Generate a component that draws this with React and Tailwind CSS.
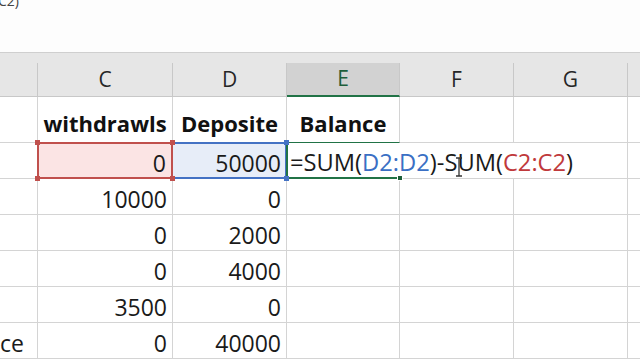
import React from "react";

const font = { fontFamily: '"Open Sans", "Noto Sans", sans-serif' };

const GRID = "grid grid-cols-[38px_135px_114px_113px_114px_114px_1fr]";

// plain data rows under the selected one
const rows = [
  ["", "10000", "0"],
  ["", "0", "2000"],
  ["", "0", "4000"],
  ["", "3500", "0"],
  ["ce", "0", "40000"],
];

const Cell = ({ children, className = "" }) => (
  <div
    className={`h-[36px] border-r border-b border-[#d4d4d4] flex items-end leading-none pb-[3px] text-[23px] text-[#1a1a1a] overflow-hidden ${className}`}
  >
    {children}
  </div>
);

const Handle = ({ className }) => (
  <span className={`absolute w-[5px] h-[5px] ${className}`} />
);

const App = () => {
  return (
    <div className="w-[640px] h-[360px] overflow-hidden bg-white" style={font}>
      {/* formula bar, scrolled mostly out of view */}
      <div className="h-[52px] bg-[#fdfdfd] overflow-hidden">
        <div className="text-[14px] leading-none text-[#444] -mt-[6px] -ml-[2px]">C2)</div>
      </div>

      {/* column headers */}
      <div className="border-t border-[#cfcfcf] bg-[#e6e6e6]">
        <div className="h-[10px]" />
        <div className={`${GRID} h-[34px] text-[21px] text-[#262626]`}>
          <div className="border-r border-b border-[#c8c8c8]" />
          <div className="border-r border-b border-[#c8c8c8] flex items-center justify-center">C</div>
          <div className="border-r border-b border-[#c8c8c8] flex items-center justify-center">D</div>
          <div className="border-r border-[#c8c8c8] border-b-2 border-b-[#217346] bg-[#d2d2d2] flex items-center justify-center text-[#1d5e3a]">E</div>
          <div className="border-r border-b border-[#c8c8c8] flex items-center justify-center">F</div>
          <div className="border-r border-b border-[#c8c8c8] flex items-center justify-center">G</div>
          <div className="border-b border-[#c8c8c8]" />
        </div>
      </div>

      {/* title row */}
      <div className={`${GRID} font-bold text-[22px] text-[#111]`}>
        <div className="h-[46px] border-r border-b border-[#d4d4d4]" />
        <div className="h-[46px] border-r border-b border-[#d4d4d4] flex items-end justify-center pb-[8px] leading-none">withdrawls</div>
        <div className="h-[46px] border-r border-b border-[#d4d4d4] flex items-end justify-center pb-[8px] leading-none">Deposite</div>
        <div className="h-[46px] border-r border-[#d4d4d4] border-b border-b-[#217346] flex items-end justify-center pb-[8px] leading-none">Balance</div>
        <div className="h-[46px] border-r border-b border-[#d4d4d4]" />
        <div className="h-[46px] border-r border-b border-[#d4d4d4]" />
        <div className="h-[46px] border-b border-[#d4d4d4]" />
      </div>

      {/* row being edited */}
      <div className={`${GRID} relative`}>
        <Cell />
        <Cell className="relative justify-end pr-[6px] bg-[#fbe4e4] overflow-visible">
          <span className="absolute -top-[1px] -left-[1px] -right-[1px] -bottom-[1px] border-2 border-[#c0504d]" />
          <Handle className="-top-[3px] -left-[3px] bg-[#c0504d]" />
          <Handle className="-top-[3px] -right-[3px] bg-[#c0504d] z-10" />
          <Handle className="-bottom-[3px] -left-[3px] bg-[#c0504d]" />
          <Handle className="-bottom-[3px] -right-[3px] bg-[#c0504d] z-10" />
          <span className="relative">0</span>
        </Cell>
        <Cell className="relative justify-end pr-[5px] bg-[#e7edf8] overflow-visible">
          <span className="absolute -top-[1px] left-0 -right-[1px] -bottom-[1px] border-2 border-l-0 border-[#4472c4]" />
          <Handle className="-top-[3px] -right-[3px] bg-[#4472c4] z-10" />
          <Handle className="-bottom-[3px] -right-[3px] bg-[#4472c4] z-10" />
          <span className="relative">50000</span>
        </Cell>
        <div className="relative h-[36px] border-b-2 border-[#217346] flex items-end leading-none pb-[2px] pl-[3px] text-[23.7px] text-[#1a1a1a] whitespace-nowrap">
          <span className="absolute -top-[1px] -left-[1px] bottom-[-2px] w-[2px] bg-[#217346]" />
          <span className="absolute -right-[3px] -bottom-[4px] w-[6px] h-[6px] bg-[#1b5e38] border border-white z-10" />
          <span className="relative z-20">
            =SUM(<span className="text-[#3a6fc4]">D2:D2</span>)-SUM(<span className="text-[#c0393b]">C2:C2</span>)
          </span>
        </div>
        <div className="h-[36px] border-b border-[#d4d4d4]" />
        <div className="h-[36px] border-r border-b border-[#d4d4d4]" />
        <div className="h-[36px] border-b border-[#d4d4d4]" />

        {/* text cursor */}
        <svg className="absolute left-[455px] top-[14px] z-30" width="8" height="20" viewBox="0 0 8 20">
          <path d="M1 1h6M4 1v18M1 19h6" stroke="#333" strokeWidth="1.3" fill="none" />
        </svg>
      </div>

      {rows.map((r, i) => (
        <div key={i} className={GRID}>
          <Cell className="pl-0">{r[0]}</Cell>
          <Cell className="justify-end pr-[5px]">{r[1]}</Cell>
          <Cell className="justify-end pr-[5px]">{r[2]}</Cell>
          <Cell />
          <Cell />
          <Cell />
          <Cell className="border-r-0" />
        </div>
      ))}
    </div>
  );
};

export default App;
